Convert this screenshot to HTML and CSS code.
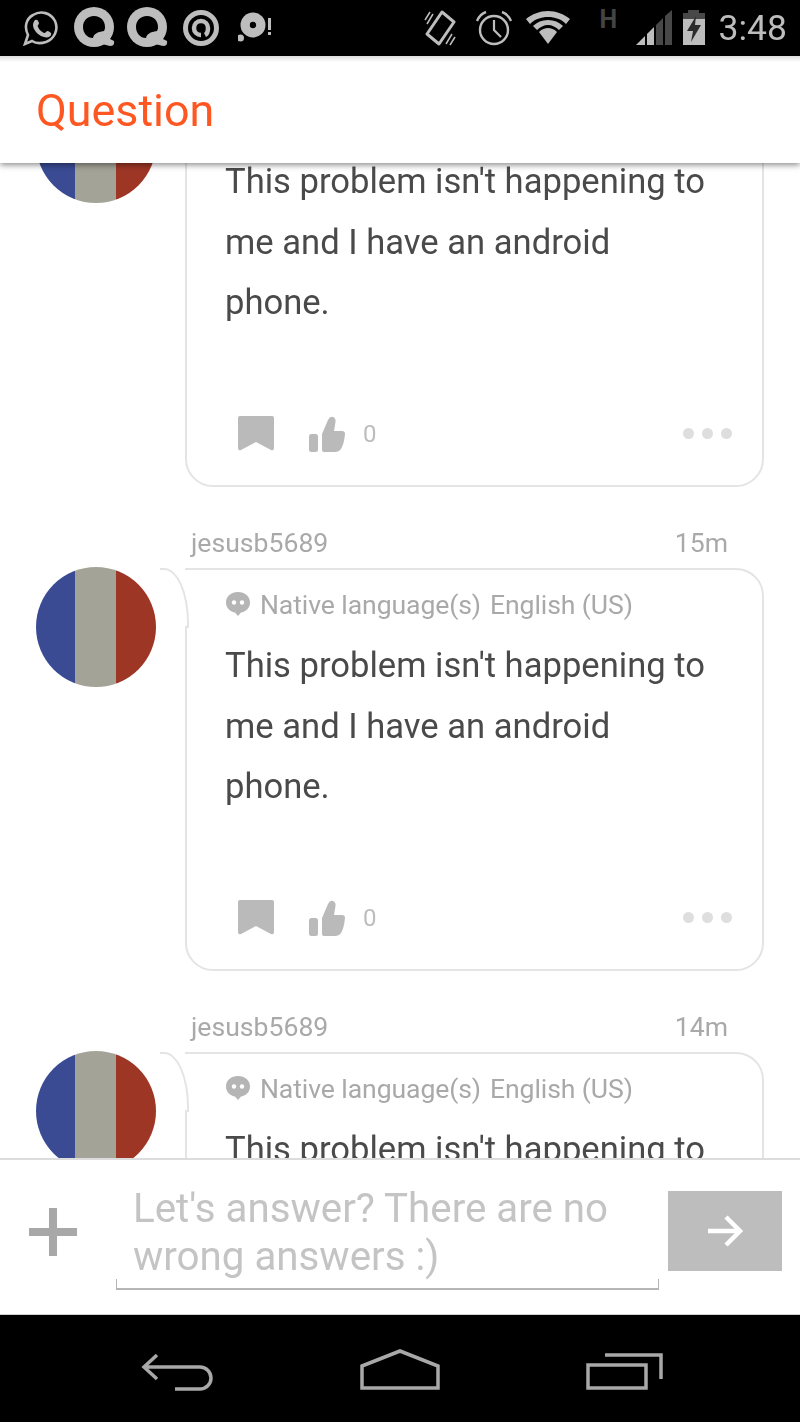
FILE: index.html
```html
<!DOCTYPE html>
<html>
<head>
    <meta charset="utf-8">
    <title>Question</title>
    <link rel="stylesheet" href="styles.css">
</head>
<body>
    <svg class="sprites" width="0" height="0">
        <symbol id="chatIcon" viewBox="0 0 24 24">
            <path fill="#b5b5b5" d="M12 0C5 0 0 4.500 0 10.500S5 20 9 20.500L12 24L15 20.500C19 20 24 16.500 24 10.500S19 0 12 0Z"/>
            <circle cx="8" cy="10.500" r="2.200" fill="#fff"/>
            <circle cx="16" cy="10.500" r="2.200" fill="#fff"/>
        </symbol>
        <symbol id="bookmarkIcon" viewBox="0 0 36 36">
            <path fill="#bababa" d="M2 0H34Q36 0 36 2V32Q36 35 33 34L18 26L3 34Q0 35 0 32V2Q0 0 2 0Z"/>
        </symbol>
        <symbol id="thumbIcon" viewBox="0 0 36 36">
            <rect x="0" y="18" width="9" height="18" rx="2.500" fill="#bababa"/>
            <path fill="#bababa" d="M13 34V18L19 4Q21 0 24 1Q27 2 26.500 6L25 15H33Q36 15 36 18Q35 28 32 33Q30 36 27 36H16Q13 36 13 34Z"/>
        </symbol>
    </svg>

    <div class="page">
        <div class="statusBar">
            <div class="statusLeft">
                <svg class="icon" width="36" height="36" viewBox="0 0 36 36">
                    <path fill="none" stroke="#bdbdbd" stroke-width="2.600" d="M2 34L5 25C1 17 3 9 10 5C18 0 28 3 32 11C36 20 31 29 23 32C17 34 12 33 9 31Z"/>
                    <path fill="#bdbdbd" d="M12 10C14 9 15 10 16 13C16 15 14 15 15 17C16 20 19 22 21 23C23 23 23 21 25 21C27 22 29 23 28 25C27 28 22 28 18 26C14 24 10 19 10 15C10 13 11 11 12 10Z"/>
                </svg>
                <svg class="icon bubble" width="42" height="42" viewBox="0 0 42 42">
                    <circle cx="20" cy="20" r="20" fill="#bdbdbd"/>
                    <path fill="#bdbdbd" d="M28 28L40 34Q41 39 36 39L24 36Z"/>
                    <path fill="#000" d="M20 9C13 9 9 14 9 20S13 31 19 31C20 27 23 25 30 24C31 22 31 21 31 20C31 14 27 9 20 9Z"/>
                </svg>
                <svg class="icon bubble" width="42" height="42" viewBox="0 0 42 42">
                    <circle cx="20" cy="20" r="20" fill="#bdbdbd"/>
                    <path fill="#bdbdbd" d="M28 28L40 34Q41 39 36 39L24 36Z"/>
                    <path fill="#000" d="M20 9C13 9 9 14 9 20S13 31 19 31C20 27 23 25 30 24C31 22 31 21 31 20C31 14 27 9 20 9Z"/>
                </svg>
                <svg class="icon at" width="36" height="36" viewBox="0 0 36 36">
                    <circle cx="18" cy="18" r="15.500" fill="none" stroke="#bdbdbd" stroke-width="5"/>
                    <path fill="none" stroke="#bdbdbd" stroke-width="4.500" d="M22 25C24 24 25 21 25 18C25 14 22 11 18 11S11 14 11 18S14 25 18 25"/>
                </svg>
                <svg class="icon spot" width="36" height="32" viewBox="0 0 36 32">
                    <circle cx="15" cy="13" r="12.500" fill="#bdbdbd"/>
                    <circle cx="15" cy="13" r="3.200" fill="#000"/>
                    <circle cx="2.500" cy="26" r="3.500" fill="#bdbdbd"/>
                    <rect x="30" y="6" width="3" height="12" fill="#bdbdbd"/>
                    <rect x="30" y="20" width="3" height="3" fill="#bdbdbd"/>
                </svg>
            </div>
            <div class="statusRight">
                <svg class="icon" width="32" height="38" viewBox="0 0 32 38">
                    <g fill="none" stroke="#bdbdbd">
                        <path stroke-width="3" stroke-linejoin="round" d="M18 3L30 13L15 35L3 25Z"/>
                        <path stroke-width="1.500" d="M3 15L9 5M1 11L6 3M28 25L22 35M31 28L26 36"/>
                    </g>
                </svg>
                <svg class="icon alarm" width="36" height="36" viewBox="0 0 36 36">
                    <g fill="none" stroke="#bdbdbd">
                        <circle cx="18" cy="20" r="14" stroke-width="2.400"/>
                        <path stroke-width="2.200" d="M18 10V20L25 27"/>
                        <path stroke-width="2.400" d="M1 11Q4 4 10 2M35 11Q32 4 26 2"/>
                    </g>
                </svg>
                <svg class="icon wifi" width="44" height="34" viewBox="0 0 44 34">
                    <path fill="#bdbdbd" d="M22 0C14 0 6 3 0 8L4 13C9 8 15 6 22 6S35 8 40 13L44 8C38 3 30 0 22 0Z"/>
                    <path fill="#bdbdbd" d="M22 9C16 9 11 11 7 15L11 19C14 16 18 14 22 14S30 16 33 19L37 15C33 11 28 9 22 9Z"/>
                    <path fill="#bdbdbd" d="M22 17C19 17 16 18 13 21L22 33L31 21C28 18 25 17 22 17Z"/>
                </svg>
                <span class="netType">H</span>
                <svg class="icon signal" width="36" height="36" viewBox="0 0 36 36">
                    <path fill="#bdbdbd" d="M0 35L9 26V35Z"/>
                    <path fill="#bdbdbd" d="M11 24L18 17V35H11Z"/>
                    <path fill="#484848" d="M20 15L27 8V35H20ZM29 6L36 0V35H29Z"/>
                </svg>
                <svg class="icon battery" width="24" height="36" viewBox="0 0 24 36">
                    <path fill="#484848" d="M6 0H17V3H23V12H1V3H6Z"/>
                    <path fill="#bdbdbd" d="M1 9H23V35H1Z"/>
                    <path fill="#2c2c2c" d="M14 6L5 21H11L9 32L19 15H13Z"/>
                </svg>
                <span class="clock">3:48</span>
            </div>
        </div>

        <div class="appBar">Question</div>

        <div class="feed">
            <div class="feedList">
                <div class="answer">
                    <div class="avatar"></div>
                    <div class="answerMain">
                        <div class="answerHead"></div>
                        <div class="card">
                            <div class="nativeLine"></div>
                            <div class="cardText">This problem isn't happening to me and I have an android phone.</div>
                            <div class="cardActions">
                                <svg class="actionIcon" width="36" height="36"><use href="#bookmarkIcon"/></svg>
                                <svg class="actionIcon thumb" width="36" height="36"><use href="#thumbIcon"/></svg>
                                <span class="likeCount">0</span>
                                <div class="moreDots"><i></i><i></i><i></i></div>
                            </div>
                        </div>
                    </div>
                </div>
                <div class="answer">
                    <div class="avatar"></div>
                    <div class="answerMain">
                        <div class="answerHead"><span>jesusb5689</span><span>15m</span></div>
                        <div class="card">
                            <div class="nativeLine">
                                <svg class="chatIcon" width="24" height="24"><use href="#chatIcon"/></svg>
                                <span>Native language(s)</span><span>English (US)</span>
                            </div>
                            <div class="cardText">This problem isn't happening to me and I have an android phone.</div>
                            <div class="cardActions">
                                <svg class="actionIcon" width="36" height="36"><use href="#bookmarkIcon"/></svg>
                                <svg class="actionIcon thumb" width="36" height="36"><use href="#thumbIcon"/></svg>
                                <span class="likeCount">0</span>
                                <div class="moreDots"><i></i><i></i><i></i></div>
                            </div>
                        </div>
                    </div>
                </div>
                <div class="answer">
                    <div class="avatar"></div>
                    <div class="answerMain">
                        <div class="answerHead"><span>jesusb5689</span><span>14m</span></div>
                        <div class="card">
                            <div class="nativeLine">
                                <svg class="chatIcon" width="24" height="24"><use href="#chatIcon"/></svg>
                                <span>Native language(s)</span><span>English (US)</span>
                            </div>
                            <div class="cardText">This problem isn't happening to</div>
                        </div>
                    </div>
                </div>
            </div>
        </div>

        <div class="composer">
            <svg class="plusIcon" width="48" height="48" viewBox="0 0 48 48">
                <path fill="#a8a8a8" d="M20 0H28V20H48V28H28V48H20V28H0V20H20Z"/>
            </svg>
            <div class="answerInput">Let's answer? There are no wrong answers :)</div>
            <div class="sendButton">
                <svg width="36" height="32" viewBox="0 0 36 32">
                    <path fill="none" stroke="#fff" stroke-width="4.500" d="M1 16H32M19 2L33 16L19 30"/>
                </svg>
            </div>
        </div>

        <div class="navBar">
            <svg width="80" height="50" viewBox="0 0 80 50">
                <path fill="none" stroke="#a8a8a8" stroke-width="3.500" d="M19 10L6 22L19 34M6 22H62C68 22 73 27 73 33S68 44 62 44H37"/>
            </svg>
            <svg width="80" height="50" viewBox="0 0 80 50">
                <path fill="none" stroke="#a8a8a8" stroke-width="3.500" d="M2 21L40 6L78 21V43H2Z"/>
            </svg>
            <svg class="recentIcon" width="80" height="50" viewBox="0 0 80 50">
                <path fill="none" stroke="#a8a8a8" stroke-width="3.500" d="M3 20H61V43H3Z"/>
                <path fill="none" stroke="#a8a8a8" stroke-width="3.500" d="M20 10H76V34"/>
            </svg>
        </div>
    </div>
</body>
</html>
```

FILE: styles.css
```css
* {
    box-sizing: border-box;
}

html,
body {
    margin: 0;
    padding: 0;
    background-color: white;
}

.sprites {
    position: absolute;
}

.page {
    display: flex;
    flex-direction: column;
    width: 800px;
    height: 1422px;
    overflow: hidden;
    font-family: Roboto, "Liberation Sans", sans-serif;
    filter: blur(0.5px);
}

.icon {
    display: block;
    flex-shrink: 0;
}

/* status bar */

.statusBar {
    display: flex;
    justify-content: space-between;
    align-items: center;
    height: 56px;
    padding: 0 13px 0 23px;
    background-color: black;
}

.statusLeft,
.statusRight {
    display: flex;
    align-items: center;
}

.bubble {
    margin-left: 15px;
}

.bubble + .bubble {
    margin-left: 11px;
}

.at {
    margin-left: 14px;
}

.spot {
    margin-left: 19px;
}

.alarm {
    margin-left: 20px;
}

.wifi {
    margin-left: 14px;
}

.netType {
    width: 18px;
    margin: -18px 0 0 30px;
    color: #444;
    font-size: 25px;
    font-weight: 700;
}

.signal {
    margin-left: 18px;
}

.battery {
    margin-left: 10px;
}

.clock {
    margin-left: 13px;
    color: #bdbdbd;
    font-size: 35.500px;
}

/* app bar */

.appBar {
    position: relative;
    z-index: 2;
    height: 107px;
    padding: 28px 0 0 36px;
    background: linear-gradient(#dcdcdc, white 6px);
    box-shadow: 0 2px 6px rgba(0, 0, 0, 0.45);
    color: #ff5722;
    font-size: 44.800px;
    line-height: 54px;
}

/* answers */

.feed {
    flex: 1;
    min-height: 0;
    overflow: hidden;
}

.feedList {
    margin-top: -122px;
}

.answer {
    display: flex;
    padding: 0 36px;
    margin-bottom: 38px;
}

.avatar {
    flex-shrink: 0;
    width: 120px;
    height: 120px;
    margin-top: 42px;
    border-radius: 50%;
    background: linear-gradient(to right, #3a4b94 0, #3a4b94 32.500%, #a3a398 32.500%, #a3a398 66.500%, #9e3626 66.500%, #9e3626 100%);
}

.answerMain {
    flex: 1;
    margin-left: 29px;
}

.answerHead {
    display: flex;
    justify-content: space-between;
    height: 36px;
    margin-bottom: 7px;
    padding: 0 36px 0 6px;
    color: #a9a9a9;
    font-size: 26.600px;
    line-height: 36px;
}

.card {
    position: relative;
    height: 403px;
    padding: 16px 30px 0 38px;
    border: 2px solid #e4e4e4;
    border-radius: 0 28px 28px 28px;
}

/* hides the top of the left border so the tail curve runs into it */
.card::before {
    content: "";
    position: absolute;
    top: 0;
    left: -2px;
    width: 2px;
    height: 56px;
    background-color: white;
}

.card::after {
    content: "";
    position: absolute;
    top: -2px;
    left: -27px;
    width: 27px;
    height: 58px;
    border-top: 2px solid #e4e4e4;
    border-right: 2px solid #e4e4e4;
    border-top-right-radius: 25px 55px;
}

.nativeLine {
    display: flex;
    align-items: center;
    height: 36px;
    color: #a9a9a9;
    font-size: 26.600px;
    letter-spacing: -0.100px;
}

.chatIcon {
    margin: -1px 10px 0 1px;
}

.nativeLine span + span {
    margin-left: 9px;
}

.cardText {
    margin-top: 13px;
    padding-right: 20px;
    color: #4a4a4a;
    font-size: 34.600px;
    line-height: 60.500px;
}

.cardActions {
    display: flex;
    align-items: center;
    margin-top: 83px;
    padding-left: 13px;
}

.actionIcon {
    display: block;
}

.thumb {
    margin-left: 35px;
}

.likeCount {
    margin-left: 18px;
    color: #bdbdbd;
    font-size: 24px;
}

.moreDots {
    display: flex;
    gap: 8px;
    margin-left: auto;
}

.moreDots i {
    display: block;
    width: 11px;
    height: 11px;
    border-radius: 50%;
    background-color: #dedede;
}

/* composer */

.composer {
    display: flex;
    align-items: flex-start;
    height: 157px;
    border-top: 2px solid #dcdcdc;
    border-bottom: 1px solid #cfcfcf;
    background-color: white;
}

.plusIcon {
    flex-shrink: 0;
    margin: 48px 0 0 29px;
}

.answerInput {
    position: relative;
    width: 543px;
    height: 124px;
    margin: 6px 0 0 39px;
    padding: 19px 30px 0 17px;
    border-bottom: 2px solid #b5b5b5;
    color: #c4c4c4;
    font-size: 40.300px;
    line-height: 48px;
}

.answerInput::before,
.answerInput::after {
    content: "";
    position: absolute;
    bottom: 0;
    width: 1px;
    height: 9px;
    background-color: #b5b5b5;
}

.answerInput::before {
    left: 0;
}

.answerInput::after {
    right: 0;
}

.sendButton {
    display: flex;
    align-items: center;
    justify-content: center;
    flex-shrink: 0;
    width: 114px;
    height: 80px;
    margin: 31px 0 0 9px;
    background-color: #bdbdbd;
}

/* nav bar */

.navBar {
    display: flex;
    gap: 142px;
    height: 107px;
    padding: 30px 0 0 138px;
    background-color: black;
}

.recentIcon {
    margin-left: 3px;
}
```
